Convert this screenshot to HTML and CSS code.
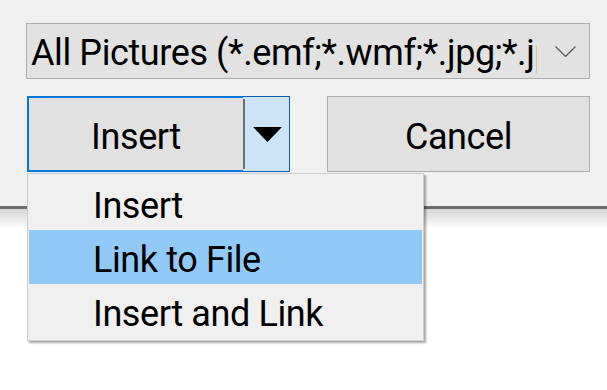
FILE: index.html
```html
<!DOCTYPE html>
<html lang="en">
<head>
  <meta charset="UTF-8" />
  <title>Insert Picture</title>
  <link rel="stylesheet" href="styles.css">
</head>
<body>
  <div class="dialog">
    <div class="combo">
      <span class="combo-text">All Pictures (*.emf;*.wmf;*.jpg;*.jpeg)</span>
      <svg class="chevron" width="21" height="11" viewBox="0 0 21 11">
        <polyline points="0.5,0.5 10.5,10.5 20.5,0.5" fill="none" stroke="#5a5a5a" stroke-width="1.3" />
      </svg>
    </div>

    <div class="actions">
      <div class="split">
        <button class="split-main">Insert</button>
        <button class="split-drop">
          <svg width="29" height="15" viewBox="0 0 29 15">
            <polygon points="0,0 29,0 14.5,15" fill="#000" />
          </svg>
        </button>

        <!-- open dropdown of the insert button -->
        <ul class="menu">
          <li>Insert</li>
          <li class="active">Link to File</li>
          <li>Insert and Link</li>
        </ul>
      </div>
      <button class="btn">Cancel</button>
    </div>
  </div>
  <div class="fade"></div>
</body>
</html>
```

FILE: styles.css
```css
:root {
  --panel: #f0f0f0;
  --btn-face: #e1e1e1;
  --btn-border: #adadad;
  --focus: #0078d7;
  --drop-bg: #cce4f7;
  --drop-border: #0c5dae;
  --menu-bg: #f0f0f0;
  --menu-border: #cccccc;
  --highlight: #91c9f7;
}

html, body {
  height: 100%;
}

body {
  margin: 0;
  min-height: 390px;
  background: #fff;
  font-family: Roboto, "Noto Sans", sans-serif;
  font-size: 36px;
  letter-spacing: -0.4px;
  color: #000;
}

.dialog {
  background: var(--panel);
  height: 209px;
  padding: 23px 0 0 26px;
  box-sizing: border-box;
  border-bottom: 3px solid #6b6b6b;
}

.fade {
  height: 20px;
  background: linear-gradient(#d6d6d6, #fff);
}

.combo {
  display: flex;
  align-items: center;
  width: 564px;
  height: 56px;
  box-sizing: border-box;
  border: 1px solid var(--btn-border);
  background: #e2e2e2;
}

.combo-text {
  flex: 1;
  overflow: hidden;
  white-space: nowrap;
  padding: 5px 0 0 4px;
  line-height: 49px;
}

.chevron {
  flex: none;
  margin: 0 13px 0 18px;
}

.actions {
  display: flex;
  gap: 37px;
  margin: 17px 0 0 1px;
}

button {
  font: inherit;
  letter-spacing: inherit;
  color: inherit;
  margin: 0;
  padding: 0;
  cursor: pointer;
}

.split {
  position: relative;
  display: flex;
  height: 76px;
}

.split-main {
  width: 216px;
  padding-top: 5px;
  background: var(--btn-face);
  border: 2px solid var(--focus);
  border-right: 0;
}

.split-drop {
  width: 47px;
  display: flex;
  align-items: center;
  justify-content: center;
  border: 1px solid var(--drop-border);
  border-left: 0;
  padding-left: 2px;
  background: linear-gradient(#6d6d6d, #6d6d6d) no-repeat 0 2px / 2px calc(100% - 4px), var(--drop-bg);
}

.btn {
  width: 263px;
  height: 76px;
  padding-top: 5px;
  background: var(--btn-face);
  border: 1px solid var(--btn-border);
}

.menu {
  position: absolute;
  z-index: 2;
  top: 77px;
  left: 0;
  width: 397px;
  box-sizing: border-box;
  margin: 0;
  padding: 2px 1px;
  list-style: none;
  background: var(--menu-bg);
  border: 1px solid var(--menu-border);
  box-shadow: 2px 2px 2px rgba(0, 0, 0, 0.35);
}

.menu li {
  height: 51px;
  padding: 3px 0 0 64px;
  line-height: 54px;
  white-space: nowrap;
}

.menu li.active {
  background: var(--highlight);
}
```
